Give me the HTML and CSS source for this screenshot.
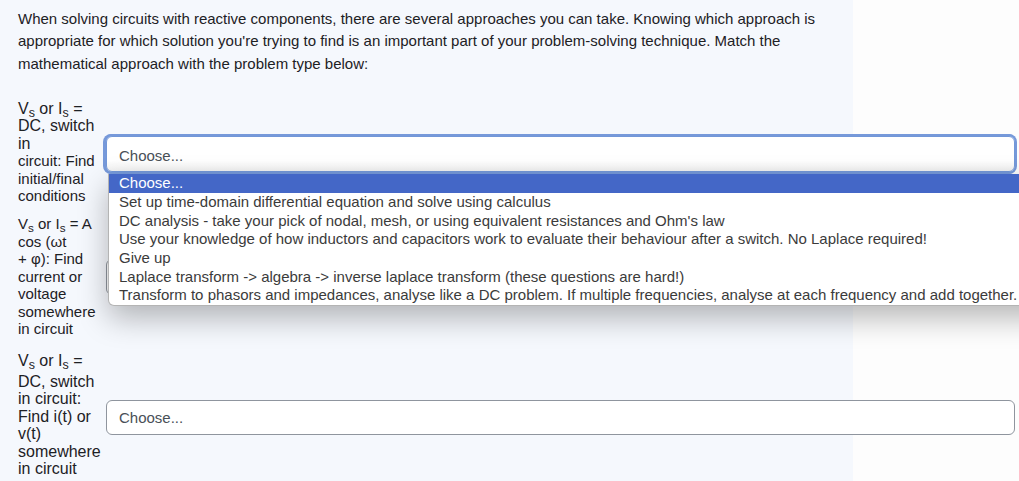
FILE: index.html
```html
<!DOCTYPE html>
<html>
<head>
<meta charset="utf-8">
<link rel="stylesheet" href="styles.css">
</head>
<body>
<div class="page">
  <p class="intro">When solving circuits with reactive components, there are several approaches you can take. Knowing which approach is appropriate for which solution you're trying to find is an important part of your problem-solving technique. Match the mathematical approach with the problem type below:</p>
  <div class="rows">
    <div class="row row1">
      <div class="label">
        <span class="l big">V<sub>s</sub> or I<sub>s</sub> =</span>
        <span class="l big">DC, switch</span>
        <span class="l big">in</span>
        <span class="l">circuit: Find</span>
        <span class="l">initial/final</span>
        <span class="l">conditions</span>
      </div>
      <div class="select focused">
        <span class="value">Choose...</span>
        <div class="popup">
          <div class="opt active">Choose...</div>
          <div class="opt">Set up time-domain differential equation and solve using calculus</div>
          <div class="opt">DC analysis - take your pick of nodal, mesh, or using equivalent resistances and Ohm's law</div>
          <div class="opt">Use your knowledge of how inductors and capacitors work to evaluate their behaviour after a switch. No Laplace required!</div>
          <div class="opt">Give up</div>
          <div class="opt">Laplace transform -&gt; algebra -&gt; inverse laplace transform (these questions are hard!)</div>
          <div class="opt">Transform to phasors and impedances, analyse like a DC problem. If multiple frequencies, analyse at each frequency and add together.</div>
        </div>
      </div>
    </div>
    <div class="row row2">
      <div class="label">
        <span class="l">V<sub>s</sub> or I<sub>s</sub> = A</span>
        <span class="l">cos (ωt</span>
        <span class="l">+ φ): Find</span>
        <span class="l">current or</span>
        <span class="l">voltage</span>
        <span class="l">somewhere</span>
        <span class="l">in circuit</span>
      </div>
      <div class="select">
        <span class="value">Choose...</span>
      </div>
    </div>
    <div class="row row3">
      <div class="label big">
        <span class="l first">V<sub>s</sub> or I<sub>s</sub> =</span>
        <span class="l">DC, switch</span>
        <span class="l">in circuit:</span>
        <span class="l">Find i(t) or</span>
        <span class="l">v(t)</span>
        <span class="l">somewhere</span>
        <span class="l">in circuit</span>
      </div>
      <div class="select s3">
        <span class="value">Choose...</span>
      </div>
    </div>
  </div>
</div>
</body>
</html>
```

FILE: styles.css
```css
html, body {
  margin: 0;
  padding: 0;
  height: 100%;
  overflow: hidden;
  background: #fdfdfd;
}

body {
  font-family: "Liberation Sans", Arial, sans-serif;
  color: #1d2125;
}

.page {
  width: 853px;
  min-height: 481px;
  box-sizing: border-box;
  padding: 7.5px 0 0 18px;
  background: #f5f8fd;
}

.intro {
  margin: 0;
  width: 817px;
  font-size: 15px;
  line-height: 22.5px;
}

.rows {
  margin-top: 24.7px;
}

.row {
  display: flex;
  align-items: center;
}

.row2 {
  margin-top: 10.7px;
}

.row3 {
  margin-top: 14.3px;
}

.label {
  flex: none;
  width: 88px;
  font-size: 15px;
  line-height: 17.5px;
}

.label .l {
  display: block;
  white-space: nowrap;
}

.big {
  font-size: 16px;
}

.label sub {
  font-size: 0.78em;
  line-height: 0;
  vertical-align: -0.22em;
}

.row3 .first {
  margin-bottom: 3px;
}

.select {
  flex: none;
  position: relative;
  width: 909px;
  height: 36px;
  box-sizing: border-box;
  display: flex;
  align-items: center;
  padding-left: 12px;
  border: 1px solid #8f959e;
  border-radius: 6px;
  background: #fff;
  font-size: 15px;
  color: #495057;
}

.select.focused {
  margin-top: 4px;
  padding-top: 3px;
  border-color: #7297d8;
  box-shadow: 0 0 0 2px #7699da, -1px 0 0 2px #7699da;
  background: linear-gradient(#fff 70%, #f1f1f1);
}

.select.s3 {
  margin-top: 5px;
  height: 35px;
}

.popup {
  position: absolute;
  left: 1px;
  top: calc(100% + 3px);
  width: 960px;
  box-sizing: border-box;
  background: #fff;
  border: 1px solid #b4b4b4;
  border-top: none;
  border-radius: 0 0 0 6px;
  box-shadow: 0 12px 30px rgba(0, 0, 0, 0.28);
  z-index: 5;
  color: #3b3b3b;
}

.opt {
  height: 18.7px;
  line-height: 18.7px;
  padding-left: 10px;
  white-space: nowrap;
  font-size: 15px;
}

.opt.active {
  background: #4467c7;
  color: #fff;
}
```
